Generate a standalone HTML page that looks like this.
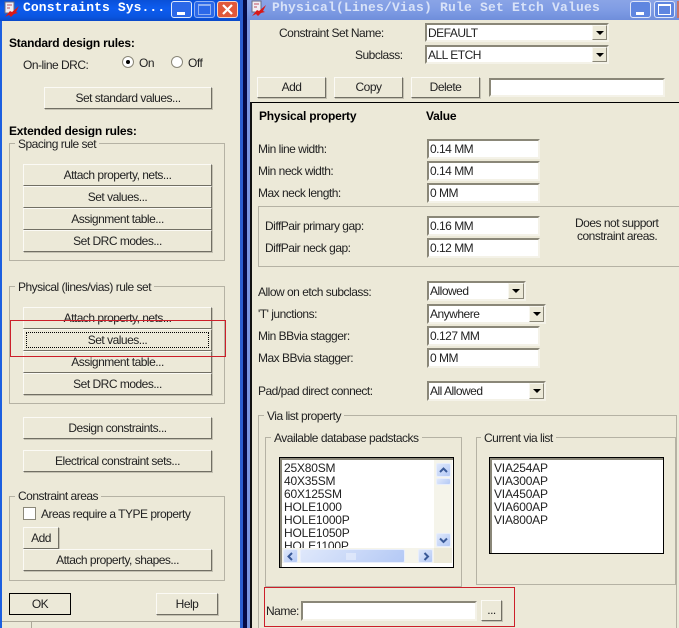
<!DOCTYPE html>
<html style="overflow:hidden;width:679px;height:628px"><head><meta charset="utf-8">
<style>
html,body{margin:0;padding:0}
body{width:679px;height:628px;overflow:hidden;position:relative;background:#ece9d8;font-family:"Liberation Sans",sans-serif;font-size:12px;letter-spacing:-.5px;color:#222}
div,span,svg{position:absolute;box-sizing:border-box}
.t{white-space:nowrap;line-height:14px;height:14px}
.b{font-weight:bold;color:#000;font-size:12px;letter-spacing:-.2px}
.btn{background:#ece9d8;border:1px solid;border-color:#fbfaf5 #716f64 #716f64 #fbfaf5;box-shadow:1px 1px 0 #c4c1b2;text-align:center;white-space:nowrap;color:#222}
.in{background:#fff;border:2px solid;border-color:#8a8778 #f4f2e8 #f4f2e8 #8a8778;white-space:nowrap;line-height:16px;padding-left:1px;color:#222}
.gb{border:1px solid #b5b2a4}
.lg{background:#ece9d8;padding:0 3px;white-space:nowrap;line-height:14px;height:14px;color:#222}
.arr{background:#ece9d8;border:1px solid;border-color:#f8f7f0 #8a8778 #8a8778 #f8f7f0}
.arr:after{content:"";position:absolute;left:3px;top:5px;border:4px solid transparent;border-top:4px solid #000;border-bottom:0}
.list{background:#fff;border:1px solid #000;overflow:hidden;box-shadow:inset 2px 2px 0 #8a8778}
.list .t{left:4px;font-size:12px;letter-spacing:-.2px}
.sb{background:linear-gradient(135deg,#dfe8fb,#b4c9f5);border:1px solid #e8eefc;border-radius:2px}
.sb svg{left:2px;top:3px}
</style></head><body>

<!-- left window -->
<div style="left:0;top:0;width:243px;height:628px;background:#1c5fe0"></div>
<div style="left:0;top:0;width:243px;height:21px;background:linear-gradient(#0a50d8,#0d5cef 40%,#0a55e0 80%,#0a48c8)"></div>
<div style="left:2px;top:21px;width:238px;height:607px;background:#ece9d8"></div>
<svg style="left:4px;top:1px" width="17" height="18" viewBox="0 0 17 18"><path d="M1 1h9v11H1z" fill="#f0eef4" stroke="#6a6a80"/><path d="M3 4h5M3 7h3" stroke="#c05060"/><path d="M1 16L6 10l2 1 7-6-3 6 2 1-4 1-3 3-2-2z" fill="#d81818"/></svg>
<div class="t" style="left:23px;top:0;height:16px;line-height:15px;font:bold 13px 'Liberation Mono',monospace;color:#fff;letter-spacing:.1px">Constraints Sys...</div>
<div style="left:171px;top:1px;width:21px;height:17px;background:#2b68e8;border:1px solid #dfe9fb;border-radius:3px"><div style="left:5px;top:10px;width:8px;height:3px;background:#fff"></div></div>
<div style="left:194px;top:1px;width:21px;height:17px;background:#2b68e8;border:1px solid #8fb0f2;border-radius:3px"><div style="left:3px;top:2px;width:13px;height:11px;border:1px solid #8fb0f2;border-top-width:2px"></div></div>
<div style="left:217px;top:1px;width:21px;height:17px;background:#e0583a;border:1px solid #f3d7cc;border-radius:3px"><svg style="left:3px;top:1px" width="13" height="13"><path d="M2 2L11 11M11 2L2 11" stroke="#fff" stroke-width="2.2"/></svg></div>

<div class="t b" style="left:9px;top:36px">Standard design rules:</div>
<div class="t" style="left:23px;top:58px">On-line DRC:</div>
<div style="left:122px;top:56px;width:12px;height:12px;border-radius:50%;background:#fff;border:1px solid #8a8778"><div style="left:3px;top:3px;width:4px;height:4px;border-radius:50%;background:#000"></div></div>
<div class="t" style="left:139px;top:56px">On</div>
<div style="left:171px;top:56px;width:12px;height:12px;border-radius:50%;background:#fff;border:1px solid #8a8778"></div>
<div class="t" style="left:188px;top:56px">Off</div>
<div class="btn" style="left:44px;top:87px;width:168px;height:22px;line-height:20px">Set standard values...</div>

<div class="t b" style="left:9px;top:124px">Extended design rules:</div>
<div class="gb" style="left:9px;top:143px;width:216px;height:118px"></div>
<div class="lg" style="left:15px;top:137px">Spacing rule set</div>
<div class="btn" style="left:23px;top:164px;width:189px;height:22px;line-height:20px">Attach property, nets...</div>
<div class="btn" style="left:23px;top:186px;width:189px;height:22px;line-height:20px">Set values...</div>
<div class="btn" style="left:23px;top:208px;width:189px;height:22px;line-height:20px">Assignment table...</div>
<div class="btn" style="left:23px;top:230px;width:189px;height:22px;line-height:20px">Set DRC modes...</div>

<div class="gb" style="left:9px;top:286px;width:216px;height:118px"></div>
<div class="lg" style="left:15px;top:280px">Physical (lines/vias) rule set</div>
<div class="btn" style="left:23px;top:307px;width:189px;height:22px;line-height:20px">Attach property, nets...</div>
<div class="btn" style="left:23px;top:329px;width:189px;height:22px;line-height:20px">Set values...</div>
<div style="left:26px;top:332px;width:183px;height:16px;border:1px dotted #000"></div>
<div class="btn" style="left:23px;top:351px;width:189px;height:22px;line-height:20px">Assignment table...</div>
<div class="btn" style="left:23px;top:373px;width:189px;height:22px;line-height:20px">Set DRC modes...</div>
<div style="left:10px;top:320px;width:216px;height:37px;border:1px solid #cc1f2a"></div>

<div class="btn" style="left:23px;top:417px;width:189px;height:22px;line-height:20px">Design constraints...</div>
<div class="btn" style="left:23px;top:450px;width:189px;height:22px;line-height:20px">Electrical constraint sets...</div>

<div class="gb" style="left:9px;top:496px;width:216px;height:85px"></div>
<div class="lg" style="left:15px;top:489px">Constraint areas</div>
<div style="left:23px;top:507px;width:13px;height:13px;background:#fff;border:1px solid #8a8778"></div>
<div class="t" style="left:41px;top:507px">Areas require a TYPE property</div>
<div class="btn" style="left:23px;top:527px;width:36px;height:22px;line-height:20px">Add</div>
<div class="btn" style="left:23px;top:549px;width:189px;height:22px;line-height:20px">Attach property, shapes...</div>

<div class="btn" style="left:9px;top:593px;width:62px;height:22px;line-height:20px;border-color:#000;box-shadow:none">OK</div>
<div class="btn" style="left:156px;top:593px;width:62px;height:22px;line-height:20px">Help</div>
<div style="left:2px;top:621px;width:238px;height:1px;background:#aca899"></div>
<div style="left:31px;top:621px;width:1px;height:7px;background:#aca899"></div>

<!-- separator -->
<div style="left:240px;top:0;width:3px;height:628px;background:#2b5fd0"></div>
<div style="left:243px;top:0;width:4px;height:628px;background:#050a45"></div>

<!-- right window -->
<div style="left:247px;top:0;width:432px;height:628px;background:#7a96df"></div>
<div style="left:247px;top:0;width:432px;height:20px;background:linear-gradient(#8aa4e6,#7f9ce4 50%,#6f8edb)"></div>
<div style="left:250px;top:20px;width:429px;height:608px;background:#ece9d8"></div>
<svg style="left:251px;top:0" width="17" height="18" viewBox="0 0 17 18"><path d="M1 1h9v11H1z" fill="#f0eef4" stroke="#6a6a80"/><path d="M3 4h5M3 7h3" stroke="#c05060"/><path d="M1 16L6 10l2 1 7-6-3 6 2 1-4 1-3 3-2-2z" fill="#d81818"/></svg>
<div class="t" style="left:272px;top:0;height:15px;line-height:14px;font:bold 13px 'Liberation Mono',monospace;color:#d8e2f8;letter-spacing:.2px">Physical(Lines/Vias) Rule Set Etch Values</div>
<div style="left:630px;top:1px;width:21px;height:17px;background:#5f86e0;border:1px solid #dfe6f8;border-radius:3px"><div style="left:5px;top:10px;width:8px;height:3px;background:#fff"></div></div>
<div style="left:654px;top:1px;width:21px;height:17px;background:#5f86e0;border:1px solid #dfe6f8;border-radius:3px"><div style="left:3px;top:2px;width:13px;height:11px;border:1px solid #fff;border-top-width:2px"></div></div>
<div style="left:677px;top:1px;width:2px;height:17px;background:#c8756a"></div>

<div class="t" style="left:279px;top:26px">Constraint Set Name:</div>
<div class="in" style="left:425px;top:23px;width:184px;height:19px">DEFAULT</div>
<div class="arr" style="left:592px;top:25px;width:15px;height:15px"></div>
<div class="t" style="left:355px;top:48px">Subclass:</div>
<div class="in" style="left:425px;top:45px;width:184px;height:19px">ALL ETCH</div>
<div class="arr" style="left:592px;top:47px;width:15px;height:15px"></div>

<div class="btn" style="left:257px;top:77px;width:69px;height:21px;line-height:19px">Add</div>
<div class="btn" style="left:334px;top:77px;width:69px;height:21px;line-height:19px">Copy</div>
<div class="btn" style="left:411px;top:77px;width:69px;height:21px;line-height:19px">Delete</div>
<div class="in" style="left:489px;top:78px;width:176px;height:19px"></div>

<div style="left:250px;top:102px;width:429px;height:1px;background:#000"></div>
<div style="left:250px;top:102px;width:2px;height:526px;background:#111"></div>

<div class="t b" style="left:259px;top:109px">Physical property</div>
<div class="t b" style="left:426px;top:109px">Value</div>

<div class="t" style="left:258px;top:142px">Min line width:</div>
<div class="in" style="left:427px;top:139px;width:113px;height:20px">0.14 MM</div>
<div class="t" style="left:258px;top:164px">Min neck width:</div>
<div class="in" style="left:427px;top:161px;width:113px;height:20px">0.14 MM</div>
<div class="t" style="left:258px;top:186px">Max neck length:</div>
<div class="in" style="left:427px;top:183px;width:113px;height:20px">0 MM</div>

<div class="gb" style="left:258px;top:206px;width:421px;height:61px;border-right:0"></div>
<div class="t" style="left:265px;top:219px">DiffPair primary gap:</div>
<div class="in" style="left:427px;top:216px;width:113px;height:20px">0.16 MM</div>
<div class="t" style="left:265px;top:241px">DiffPair neck gap:</div>
<div class="in" style="left:427px;top:238px;width:113px;height:20px">0.12 MM</div>
<div class="t" style="left:575px;top:216px">Does not support</div>
<div class="t" style="left:577px;top:229px">constraint areas.</div>

<div class="t" style="left:258px;top:285px">Allow on etch subclass:</div>
<div class="in" style="left:427px;top:281px;width:99px;height:20px">Allowed</div>
<div class="arr" style="left:508px;top:283px;width:16px;height:16px"></div>
<div class="t" style="left:258px;top:307px">'T' junctions:</div>
<div class="in" style="left:427px;top:304px;width:119px;height:20px">Anywhere</div>
<div class="arr" style="left:529px;top:306px;width:15px;height:16px"></div>
<div class="t" style="left:258px;top:329px">Min BBvia stagger:</div>
<div class="in" style="left:427px;top:326px;width:113px;height:20px">0.127 MM</div>
<div class="t" style="left:258px;top:351px">Max BBvia stagger:</div>
<div class="in" style="left:427px;top:348px;width:113px;height:20px">0 MM</div>
<div class="t" style="left:258px;top:384px">Pad/pad direct connect:</div>
<div class="in" style="left:427px;top:381px;width:119px;height:20px">All Allowed</div>
<div class="arr" style="left:529px;top:383px;width:15px;height:16px"></div>

<div class="gb" style="left:258px;top:415px;width:419px;height:213px;border-bottom:0"></div>
<div class="lg" style="left:264px;top:409px">Via list property</div>

<div class="gb" style="left:265px;top:437px;width:197px;height:150px"></div>
<div class="lg" style="left:271px;top:431px">Available database padstacks</div>
<div class="list" style="left:279px;top:457px;width:175px;height:111px">
 <div class="t" style="top:3px">25X80SM</div>
 <div class="t" style="top:16px">40X35SM</div>
 <div class="t" style="top:29px">60X125SM</div>
 <div class="t" style="top:42px">HOLE1000</div>
 <div class="t" style="top:55px">HOLE1000P</div>
 <div class="t" style="top:68px">HOLE1050P</div>
 <div class="t" style="top:81px">HOLE1100P</div>
 <div style="left:2px;top:90px;width:172px;height:20px;background:#fff"></div>
 <div style="left:154px;top:2px;width:18px;height:88px;background:#f5f4ea"></div>
 <div style="left:154px;top:90px;width:18px;height:15px;background:#ece9d8"></div>
 <div class="sb" style="left:156px;top:5px;width:15px;height:14px"><svg width="9" height="7"><path d="M1 5L4.500 1.500 8 5" fill="none" stroke="#3a5a98" stroke-width="2"/></svg></div>
 <div class="sb" style="left:156px;top:20px;width:15px;height:7px"></div>
 <div class="sb" style="left:156px;top:75px;width:15px;height:14px"><svg width="9" height="7"><path d="M1 1.500L4.500 5 8 1.500" fill="none" stroke="#3a5a98" stroke-width="2"/></svg></div>
 <div style="left:2px;top:90px;width:152px;height:15px;background:#f5f4ea"></div>
 <div class="sb" style="left:3px;top:91px;width:15px;height:14px"><svg style="left:3px;top:2px" width="7" height="9"><path d="M5 1L1.500 4.500 5 8" fill="none" stroke="#3a5a98" stroke-width="2"/></svg></div>
 <div class="sb" style="left:20px;top:91px;width:105px;height:14px"><svg style="left:45px;top:3px" width="12" height="7"><path d="M1 0v7M3 0v7M5 0v7M7 0v7M9 0v7" stroke="#f0f4fd" stroke-width="1"/></svg></div>
 <div class="sb" style="left:138px;top:91px;width:15px;height:14px"><svg style="left:4px;top:2px" width="7" height="9"><path d="M1.500 1L5 4.500 1.500 8" fill="none" stroke="#3a5a98" stroke-width="2"/></svg></div>
</div>

<div class="gb" style="left:476px;top:437px;width:200px;height:148px"></div>
<div class="lg" style="left:481px;top:431px">Current via list</div>
<div class="list" style="left:489px;top:457px;width:175px;height:97px">
 <div class="t" style="top:3px">VIA254AP</div>
 <div class="t" style="top:16px">VIA300AP</div>
 <div class="t" style="top:29px">VIA450AP</div>
 <div class="t" style="top:42px">VIA600AP</div>
 <div class="t" style="top:55px">VIA800AP</div>
</div>

<div style="left:264px;top:587px;width:251px;height:40px;border:1px solid #cc1f2a;background:#ece9d8"></div>
<div class="t" style="left:266px;top:604px">Name:</div>
<div class="in" style="left:301px;top:601px;width:176px;height:20px"></div>
<div class="btn" style="left:481px;top:600px;width:21px;height:21px;line-height:19px">...</div>

</body></html>
